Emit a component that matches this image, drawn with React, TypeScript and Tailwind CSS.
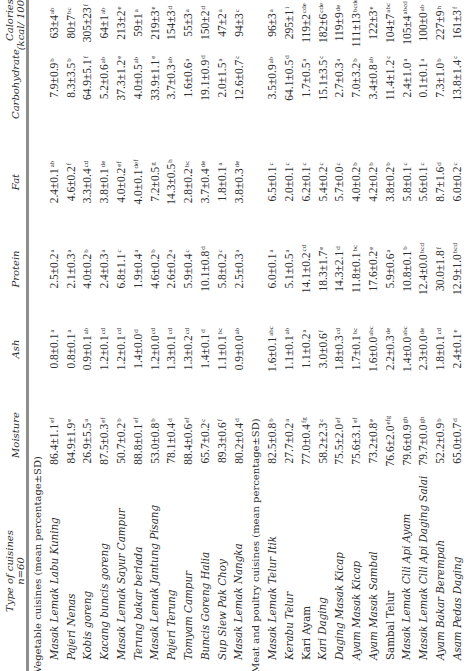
type Row = [string, string, string, string, string, string, string]

const vegetable: Row[] = [
  ['Masak Lemak Labu Kuning', '86.4±1.1^ef', '0.8±0.1^a', '2.5±0.2^a', '2.4±0.1^ab', '7.9±0.9^b', '63±4^ab'],
  ['Pajeri Nenas', '84.9±1.9^e', '0.8±0.1^a', '2.1±0.3^a', '4.6±0.2^f', '8.3±3.5^b', '80±7^bc'],
  ['Kobis goreng', '26.9±5.5^a', '0.9±0.1^ab', '4.0±0.2^b', '3.3±0.4^cd', '64.9±5.1^f', '305±23^f'],
  ['Kacang buncis goreng', '87.5±0.3^ef', '1.2±0.1^cd', '2.4±0.3^a', '3.8±0.1^de', '5.2±0.6^ab', '64±1^ab'],
  ['Masak Lemak Sayur Campur', '50.7±0.2^b', '1.2±0.1^cd', '6.8±1.1^c', '4.0±0.2^ef', '37.3±1.2^e', '213±2^e'],
  ['Terung bakar berlada', '88.8±0.1^ef', '1.4±0.0^d', '1.9±0.4^a', '4.0±0.1^def', '4.0±0.5^ab', '59±1^a'],
  ['Masak Lemak Jantung Pisang', '53.0±0.8^b', '1.2±0.0^cd', '4.6±0.2^b', '7.2±0.5^g', '33.9±1.1^e', '219±3^e'],
  ['Pajeri Terung', '78.1±0.4^d', '1.3±0.1^cd', '2.6±0.2^a', '14.3±0.5^h', '3.7±0.3^ab', '154±3^d'],
  ['Tomyam Campur', '88.4±0.6^ef', '1.3±0.2^cd', '5.9±0.4^c', '2.8±0.2^bc', '1.6±0.6^a', '55±3^a'],
  ['Buncis Goreng Halia', '65.7±0.2^c', '1.4±0.1^d', '10.1±0.8^d', '3.7±0.4^de', '19.1±0.9^d', '150±2^d'],
  ['Sup Siew Pak Choy', '89.3±0.6^f', '1.1±0.1^bc', '5.8±0.2^c', '1.8±0.1^a', '2.0±1.5^a', '47±2^a'],
  ['Masak Lemak Nangka', '80.2±0.4^d', '0.9±0.0^ab', '2.5±0.3^a', '3.8±0.3^de', '12.6±0.7^c', '94±3^c'],
]

const meat: Row[] = [
  ['Masak Lemak Telur Itik', '82.5±0.8^b', '1.6±0.1^abc', '6.0±0.1^a', '6.5±0.1^c', '3.5±0.9^ab', '96±3^a'],
  ['Kerabu Telur', '27.7±0.2^a', '1.1±0.1^ab', '5.1±0.5^a', '2.0±0.1^c', '64.1±0.5^d', '295±1^i'],
  ['Kari Ayam', '77.0±0.4^fg', '1.1±0.2^a', '14.1±0.2^cd', '6.2±0.1^c', '1.7±0.5^a', '119±2^cde'],
  ['Kari Daging', '58.2±2.3^c', '3.0±0.6^f', '18.3±1.7^e', '5.4±0.2^c', '15.1±3.5^c', '182±6^cde'],
  ['Daging Masak Kicap', '75.5±2.0^ef', '1.8±0.3^cd', '14.3±2.1^d', '5.7±0.0^c', '2.7±0.3^a', '119±9^de'],
  ['Ayam Masak Kicap', '75.6±3.1^ef', '1.7±0.1^bc', '11.8±0.1^bc', '4.0±0.2^b', '7.0±3.2^b', '111±13^bcde'],
  ['Ayam Masak Sambal', '73.2±0.8^e', '1.6±0.0^abc', '17.6±0.2^e', '4.2±0.2^b', '3.4±0.8^ab', '122±3^e'],
  ['Sambal Telur', '76.6±2.0^efg', '2.2±0.3^de', '5.9±0.6^a', '3.8±0.2^b', '11.4±1.2^c', '104±7^abc'],
  ['Masak Lemak Cili Api  Ayam', '79.6±0.9^gh', '1.4±0.0^abc', '10.8±0.1^b', '5.8±0.1^c', '2.4±1.0^a', '105±4^abcd'],
  ['Masak Lemak Cili Api Daging Salai', '79.7±0.0^gh', '2.3±0.0^de', '12.4±0.0^bcd', '5.6±0.1^c', '0.1±0.1^a', '100±0^ab'],
  ['Ayam Bakar Berempah', '52.2±0.9^b', '1.8±0.1^cd', '30.0±1.8^f', '8.7±1.6^d', '7.3±1.0^b', '227±9^h'],
  ['Asam Pedas Daging', '65.0±0.7^d', '2.4±0.1^e', '12.9±1.0^bcd', '6.0±0.2^c', '13.8±1.4^c', '161±3^f'],
]

// names set upright in the source table
const upright = ['Kari Ayam', 'Sambal Telur']

const cols = 'grid grid-cols-[200px_60px_124px_36px_138px_70px_40px]'
const serif = "font-['DejaVu_Serif',serif]"

function Value({ text }: { text: string }) {
  const [v, sup] = text.split('^')
  return (
    <div className="flex justify-center items-center whitespace-nowrap">
      <span>
        {v}
        <sup className="text-[7px] ml-[1px]">{sup}</sup>
      </span>
    </div>
  )
}

function Section({ label }: { label: string }) {
  return (
    <div className={`h-[16.8px] flex items-center -ml-[2px] whitespace-nowrap text-[10px] ${serif}`}>
      {label}
    </div>
  )
}

function DataRow({ row }: { row: Row }) {
  const [name, ...values] = row
  return (
    <div className={`${cols} h-[16.8px] items-center`}>
      <div
        className={`pl-[11px] whitespace-nowrap text-[10.3px] ${serif} ${upright.includes(name) ? '' : 'italic'}`}
      >
        {name}
      </div>
      {values.map((v, i) => (
        <Value key={i} text={v} />
      ))}
    </div>
  )
}

export default function App() {
  return (
    <div className="w-[474px] h-[671px] overflow-hidden bg-white text-[#2e2e2e]">
      <div className="w-[671px] h-[474px] origin-top-left translate-y-[671px] -rotate-90 font-['Liberation_Serif',serif] text-[11.5px]">
        <div className={`${cols} h-[26px] pt-[4px] leading-[11px] text-[10px] italic ${serif}`}>
          <div className="flex flex-col items-center justify-center">
            <span>Type of cuisines</span>
            <span>n=60</span>
          </div>
          <div className="flex justify-center items-center pl-[12px]">Moisture</div>
          <div className="flex justify-center items-center">Ash</div>
          <div className="flex justify-center items-center whitespace-nowrap">Protein</div>
          <div className="flex justify-center items-center">Fat</div>
          <div className="flex justify-center items-center pr-[12px]">Carbohydrate</div>
          <div className="flex flex-col justify-center items-center pl-[6px] whitespace-nowrap">
            <span>Calories</span>
            <span>(kcal/ 100g)</span>
          </div>
        </div>
        <div className="h-[3px] bg-[#8e8e8e]" />

        <Section label="Vegetable cuisines (mean percentage±SD)" />
        {vegetable.map((r) => (
          <DataRow key={r[0]} row={r} />
        ))}

        <Section label="Meat and poultry cuisines (mean percentage±SD)" />
        {meat.map((r) => (
          <DataRow key={r[0]} row={r} />
        ))}
      </div>
    </div>
  )
}
